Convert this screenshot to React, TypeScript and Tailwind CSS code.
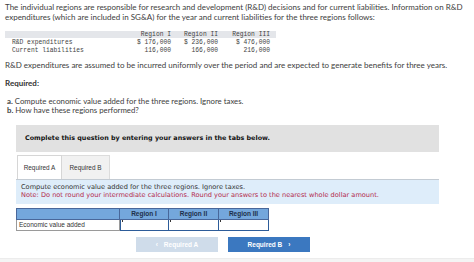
import React from "react";

const body = { fontFamily: "Lato, 'Liberation Sans', sans-serif" } as React.CSSProperties;

export default function App() {
  return (
    <div className="w-[474px] h-[262px] bg-white text-[#333] overflow-hidden relative">
      <div className="pl-[5px]" style={body}>
        <p className="pt-[3px] text-[8px] leading-[9.6px] text-[#3d3d3d]">
          The individual regions are responsible for research and development (R&amp;D) decisions and for current liabilities. Information on R&amp;D expenditures (which are included in SG&amp;A) for the year and current liabilities for the three regions follows:
        </p>
        <div className="mt-[9px] w-[271px] font-['Liberation_Mono',monospace] text-[6.3px] leading-[7.5px] text-[#444]">
          <div className="flex bg-[#e4e6ea] h-[7px] items-center">
            <div className="w-[126px]" />
            <div className="w-[40px] text-right">Region I</div>
            <div className="w-[47px] text-right">Region II</div>
            <div className="w-[52px] text-right">Region III</div>
          </div>
          <div className="flex pt-[1px]">
            <div className="w-[126px] pl-[7px]">R&amp;D expenditures</div>
            <div className="w-[40px] text-right">$ 176,000</div>
            <div className="w-[47px] text-right">$ 236,000</div>
            <div className="w-[52px] text-right">$ 476,000</div>
          </div>
          <div className="flex">
            <div className="w-[126px] pl-[7px]">Current liabilities</div>
            <div className="w-[40px] text-right">116,000</div>
            <div className="w-[47px] text-right">166,000</div>
            <div className="w-[52px] text-right">216,000</div>
          </div>
        </div>
        <p className="mt-[6px] text-[8px] leading-[10px] text-[#3d3d3d]">
          R&amp;D expenditures are assumed to be incurred uniformly over the period and are expected to generate benefits for three years.
        </p>
        <p className="mt-[8px] text-[8px] leading-[10px] font-bold text-[#333]">Required:</p>
        <div className="mt-[9px] pl-[2px] text-[7.8px] leading-[8.5px] text-[#3d3d3d]">
          <div><span className="font-bold">a.</span> Compute economic value added for the three regions. Ignore taxes.</div>
          <div><span className="font-bold">b.</span> How have these regions performed?</div>
        </div>
      </div>

      <div className="ml-[16px] w-[423px] mt-[11px]" style={{ fontFamily: "'DejaVu Sans', Verdana, sans-serif" }}>
        <div className="h-[27px] bg-[#e1e1e1] flex items-center pl-[9px] text-[6.4px] font-bold text-[#111]">
          Complete this question by entering your answers in the tabs below.
        </div>
        <div className="mt-[3px] flex h-[24px] items-end pl-[1px]" style={{ fontFamily: "'Liberation Sans', Arial, sans-serif" }}>
          <div className="h-[24px] w-[45px] bg-white border border-[#d6d6d6] border-b-0 flex items-center justify-center text-[6.4px] text-[#333]">Required A</div>
          <div className="h-[24px] w-[48px] bg-[#f1f1f1] border border-[#dcdcdc] border-b-0 border-l-0 flex items-center justify-center text-[6.4px] text-[#333]">Required B</div>
        </div>
        <div className="h-[25px] bg-[#deedfa] border-t border-[#c3cbd3] pl-[5px] pt-[4px] text-[6.6px] leading-[7.6px]">
          <div className="text-[#333]">Compute economic value added for the three regions. Ignore taxes.</div>
          <div className="text-[#b3294b]">Note: Do not round your intermediate calculations. Round your answers to the nearest whole dollar amount.</div>
        </div>
        <div className="mt-[4px] flex flex-col w-[253px] text-[6.5px]" style={{ fontFamily: "'Liberation Sans', Arial, sans-serif" }}>
          <div className="flex h-[12px] bg-[#74a7dc] border border-[#49679a]">
            <div className="w-[103px] border-r border-[#49679a]" />
            <div className="w-[49px] border-r border-[#49679a] flex items-center justify-center font-bold text-[#1d2f4a]">Region I</div>
            <div className="w-[50px] border-r border-[#49679a] flex items-center justify-center font-bold text-[#1d2f4a]">Region II</div>
            <div className="flex-1 flex items-center justify-center font-bold text-[#1d2f4a]">Region III</div>
          </div>
          <div className="flex h-[11px]">
            <div className="w-[104px] border border-t-0 border-[#9a9a9a] flex items-center pl-[2px] text-[#333]">Economic value added</div>
            <div className="w-[49px] border border-t-0 border-[#2d5c99] relative"><span className="absolute left-[1px] top-0 w-px h-[2px] bg-[#333]" /></div>
            <div className="w-[50px] border border-t-0 border-l-0 border-[#2d5c99] relative"><span className="absolute left-[1px] top-0 w-px h-[2px] bg-[#333]" /></div>
            <div className="flex-1 border border-t-0 border-l-0 border-[#2d5c99] relative"><span className="absolute left-[1px] top-0 w-px h-[2px] bg-[#333]" /></div>
          </div>
        </div>
      </div>

      <div className="mt-[6px] flex pl-[136px] gap-[10px]" style={{ fontFamily: "'Liberation Sans', Arial, sans-serif" }}>
        <div className="w-[82px] h-[15px] bg-[#cfdcea] flex items-center justify-center gap-[6px] text-[6.5px] font-bold text-white">
          <span>‹</span><span>Required A</span>
        </div>
        <div className="w-[82px] h-[15px] bg-[#3b78c0] flex items-center justify-center gap-[6px] text-[6.5px] font-bold text-white">
          <span>Required B</span><span>›</span>
        </div>
      </div>
      <div className="absolute left-0 right-0 bottom-0 h-[4px] bg-[#f4f4f4] border-t border-[#ececec]" />
    </div>
  );
}
